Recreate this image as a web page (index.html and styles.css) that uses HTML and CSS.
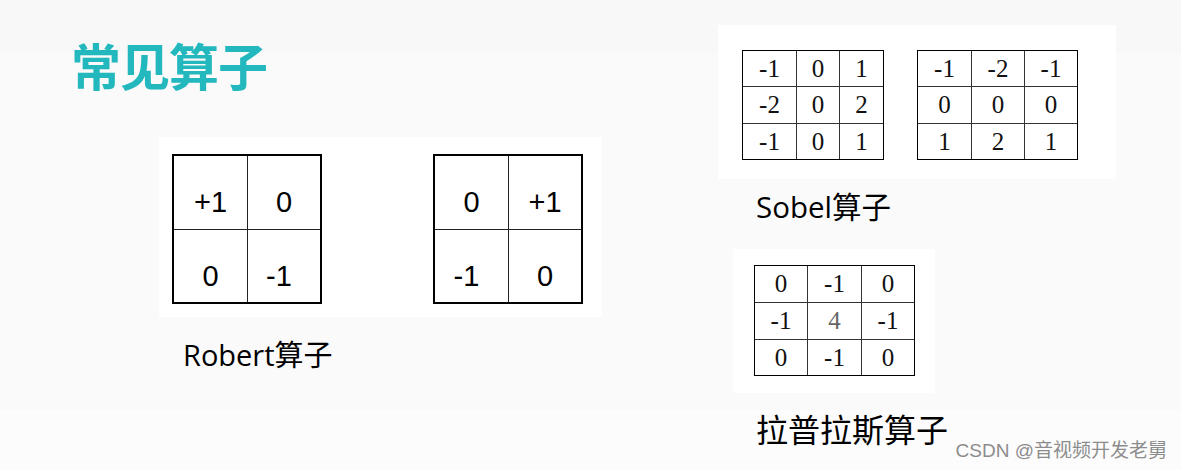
FILE: index.html
```html
<!DOCTYPE html>
<html lang="zh">
<head>
<meta charset="utf-8">
<title>常见算子</title>
<link rel="stylesheet" href="styles.css">
</head>
<body>
<div class="slide">
  <div class="col-left">
    <h1 class="title">常见算子</h1>
    <div class="panel robert-panel">
      <div class="rmat">
        <div class="rc">+1</div><div class="rc">0</div>
        <div class="rc">0</div><div class="rc neg">-1</div>
      </div>
      <div class="rmat">
        <div class="rc">0</div><div class="rc">+1</div>
        <div class="rc neg">-1</div><div class="rc">0</div>
      </div>
    </div>
    <div class="label robert-label">Robert算子</div>
  </div>
  <div class="col-right">
    <div class="panel sobel-panel">
      <div class="mat mat-a">
        <div>-1</div><div>0</div><div>1</div>
        <div>-2</div><div>0</div><div>2</div>
        <div>-1</div><div>0</div><div>1</div>
      </div>
      <div class="mat mat-b">
        <div>-1</div><div>-2</div><div>-1</div>
        <div>0</div><div>0</div><div>0</div>
        <div>1</div><div>2</div><div>1</div>
      </div>
    </div>
    <div class="label sobel-label">Sobel算子</div>
    <div class="panel lap-panel">
      <div class="mat mat-c">
        <div>0</div><div>-1</div><div>0</div>
        <div>-1</div><div class="grey">4</div><div>-1</div>
        <div>0</div><div>-1</div><div>0</div>
      </div>
    </div>
    <div class="label lap-label">拉普拉斯算子</div>
  </div>
  <div class="watermark">CSDN @音视频开发老舅</div>
</div>
</body>
</html>
```

FILE: styles.css
```css
html, body {
  margin: 0;
  padding: 0;
}
body {
  width: 1181px;
  height: 470px;
  overflow: hidden;
  font-family: "Open Sans", "Noto Sans CJK SC", sans-serif;
}
.slide {
  position: relative;
  display: flex;
  width: 1181px;
  height: 470px;
  background: linear-gradient(#f8f8f8 0, #f8f8f8 53px, #fafafa 53px, #fafafa 410px, #fcfcfc 410px);
}
.col-left {
  width: 645px;
  padding-left: 73px;
  display: flex;
  flex-direction: column;
  align-items: flex-start;
}
.title {
  margin: 39px 0 0 -2px;
  font-family: "Noto Sans CJK SC", sans-serif;
  font-weight: 700;
  font-size: 50px;
  line-height: 50px;
  color: #22b8be;
  letter-spacing: -1px;
}
.panel {
  background: #fff;
  display: flex;
  align-items: flex-start;
  box-sizing: border-box;
}
.robert-panel {
  margin: 48px 0 0 86px;
  width: 443px;
  height: 180px;
  padding: 17px 0 0 13px;
  gap: 111px;
}
.rmat {
  display: grid;
  grid-template-columns: 73px 72px;
  grid-template-rows: 73px 72px;
  gap: 1px;
  background: #222;
  border: 2px solid #000;
  width: 146px;
  height: 146px;
}
.rc {
  background: #fff;
  display: flex;
  align-items: center;
  justify-content: center;
  box-sizing: border-box;
  padding-top: 20px;
  font-family: "Liberation Sans", Arial, sans-serif;
  font-size: 29px;
  color: #000;
}
.rc.neg {
  padding-right: 10px;
}
.label {
  font-family: "Open Sans", "Noto Sans CJK SC", sans-serif;
  color: #000;
  white-space: nowrap;
}
.robert-label {
  margin: 18px 0 0 110px;
  font-size: 29px;
  line-height: 40px;
}
.col-right {
  display: flex;
  flex-direction: column;
  align-items: flex-start;
  padding-top: 25px;
}
.sobel-panel {
  width: 398px;
  height: 154px;
  padding: 25px 0 0 24px;
  gap: 33px;
}
.mat {
  display: grid;
  gap: 1px;
  background: #333;
  border: 1px solid #000;
  font-family: "Liberation Serif", "Times New Roman", serif;
  font-size: 25px;
  color: #111;
}
.mat > div {
  background: #fff;
  display: flex;
  align-items: center;
  justify-content: center;
}
.mat .grey {
  color: #666;
}
.mat-a {
  grid-template-columns: 53px 42px 43px;
  grid-template-rows: 35px 36px 35px;
}
.mat-b {
  grid-template-columns: 53px 52px 52px;
  grid-template-rows: 35px 36px 35px;
}
.mat-c {
  grid-template-columns: 52px 53px 52px;
  grid-template-rows: 36px 36px 35px;
}
.sobel-label {
  margin: 8px 0 0 38px;
  font-size: 29.5px;
  line-height: 40px;
}
.lap-panel {
  margin: 22px 0 0 15px;
  width: 202px;
  height: 144px;
  padding: 16px 0 0 21px;
}
.lap-label {
  margin: 13px 0 0 38px;
  font-family: "Noto Sans CJK SC", sans-serif;
  font-size: 32px;
  line-height: 44px;
}
.watermark {
  position: absolute;
  right: 14px;
  bottom: 8px;
  font-family: "Liberation Sans", "Noto Sans CJK SC", sans-serif;
  font-size: 19px;
  line-height: 22px;
  color: #8c8c8c;
  text-shadow: 0 0 1px #fff;
}
```
